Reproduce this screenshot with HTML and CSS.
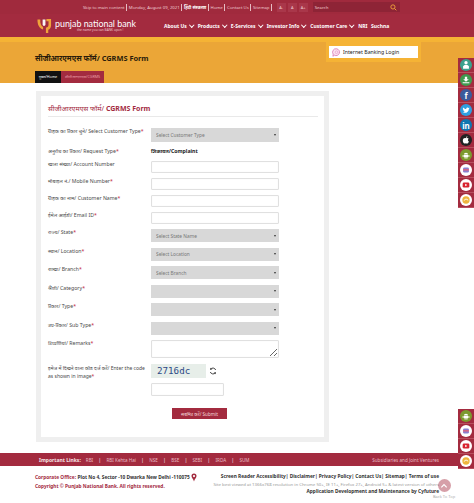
FILE: index.html
```html
<!DOCTYPE html>
<html lang="en">
<head>
    <meta charset="UTF-8">
    <meta name="viewport" content="width=device-width, initial-scale=1.0">
    <title>CGRMS Form</title>
    <link rel="stylesheet" href="styles.css">
</head>
<body>
    <header class="site-header">
        <div class="top-bar">
            <span>Skip to main content</span><i></i>
            <span>Monday, August 09, 2021</span><i></i>
            <span class="strong">हिंदी संस्करण</span><i></i>
            <span>Home</span><i></i>
            <span>Contact Us</span><i></i>
            <span>Sitemap</span><i></i>
            <div class="font-sizer"><b>A-</b><b>A</b><b>A+</b></div>
            <div class="search-box">
                <span>Search</span>
                <svg viewBox="0 0 10 10" width="7" height="7"><circle cx="4.2" cy="4.2" r="3" fill="none" stroke="#f0a33a" stroke-width="1.3"/><path d="M6.5 6.5L9 9" stroke="#f0a33a" stroke-width="1.4"/></svg>
            </div>
        </div>
        <div class="main-nav">
            <div class="logo">
                <svg viewBox="0 0 16 16" width="15" height="15">
                    <path d="M0.5 1.5H3.5C3.2 6 4.5 8.5 6.5 9.5V12.2C2.5 11 0.3 7 0.5 1.5Z" fill="#f0a33a"/>
                    <path d="M6 1.5H9V7A1.5 1.5 0 0 1 6 7Z" fill="#fff" opacity="0.95"/>
                    <path d="M10 1H15V8C15 10.5 13.5 12 12 12.5V16H9.5V10.5C11.5 10 12.3 9 12.3 7V3.5H10Z" fill="#f0a33a"/>
                </svg>
                <div class="logo-text">
                    <div class="logo-name">punjab national bank</div>
                    <div class="logo-tag">the name you can BANK upon !</div>
                </div>
            </div>
            <nav class="nav-links">
                <a class="has-sub">About Us</a>
                <a class="has-sub">Products</a>
                <a class="has-sub">E-Services</a>
                <a class="has-sub">Investor Info</a>
                <a class="has-sub">Customer Care</a>
                <a>NRI</a>
                <a>Suchna</a>
            </nav>
        </div>
    </header>

    <section class="hero">
        <div class="hero-left">
            <h1>सीजीआरएमएस फॉर्म/ CGRMS Form</h1>
            <div class="breadcrumb">
                <span class="crumb-home">मुख्य/Home</span>
                <span class="crumb-page">सीजीआरएमएस/CGRMS</span>
            </div>
        </div>
        <div class="login-wrap">
            <div class="login-box">
                <svg viewBox="0 0 12 12" width="9" height="9"><path d="M6 1A4.6 4.6 0 1 1 3.2 9.6L1.2 11L1.6 8.2A4.6 4.6 0 0 1 6 1Z" fill="#fbe3f1" stroke="#d977b5" stroke-width="1.1"/><circle cx="6" cy="5.6" r="1.8" fill="none" stroke="#e79ac9" stroke-width="0.9"/></svg>
                <span>Internet Banking Login</span>
            </div>
        </div>
    </section>

    <main class="card">
        <h2><span>सीजीआरएमएस फॉर्म/</span> CGRMS Form</h2>
        <form class="form">
            <div class="row row-first">
                <label>ग्राहक का प्रकार चुने/ Select Customer Type<em>*</em></label>
                <div class="select-wrap"><select><option>Select Customer Type</option></select></div>
            </div>
            <div class="row row-text">
                <label>अनुरोध का प्रकार/ Request Type<em>*</em></label>
                <div class="plain-value">शिकायत/Complaint</div>
            </div>
            <div class="row">
                <label>खाता संख्या/ Account Number</label>
                <input type="text">
            </div>
            <div class="row">
                <label>मोबाइल नं./ Mobile Number<em>*</em></label>
                <input type="text">
            </div>
            <div class="row">
                <label>ग्राहक का नाम/ Customer Name<em>*</em></label>
                <input type="text">
            </div>
            <div class="row">
                <label>ईमेल आईडी/ Email ID<em>*</em></label>
                <input type="text">
            </div>
            <div class="row row-select">
                <label>राज्य/ State<em>*</em></label>
                <div class="select-wrap"><select><option>Select State Name</option></select></div>
            </div>
            <div class="row row-select">
                <label>स्थान/ Location<em>*</em></label>
                <div class="select-wrap"><select><option>Select Location</option></select></div>
            </div>
            <div class="row row-select">
                <label>शाखा/ Branch<em>*</em></label>
                <div class="select-wrap"><select><option>Select Branch</option></select></div>
            </div>
            <div class="row row-select">
                <label>श्रेणी/ Category<em>*</em></label>
                <div class="select-wrap"><select><option></option></select></div>
            </div>
            <div class="row row-select">
                <label>प्रकार/ Type<em>*</em></label>
                <div class="select-wrap"><select><option></option></select></div>
            </div>
            <div class="row row-select">
                <label>उप-प्रकार/ Sub Type<em>*</em></label>
                <div class="select-wrap"><select><option></option></select></div>
            </div>
            <div class="row row-area">
                <label>टिप्पणियां/ Remarks<em>*</em></label>
                <textarea></textarea>
            </div>
            <div class="row row-captcha">
                <label>इमेज में दिखने वाला कोड दर्ज करें/ Enter the code as shown in image<em>*</em></label>
                <div class="captcha">
                    <div class="captcha-line">
                        <div class="captcha-code">2716dc</div>
                        <svg viewBox="0 0 12 12" width="8" height="8"><path d="M10 4.5A4.3 4.3 0 0 0 2.4 3.4M2 7.5A4.3 4.3 0 0 0 9.6 8.6" fill="none" stroke="#444" stroke-width="1.5"/><path d="M1.6 1L2 4.4L5 3.4ZM10.4 11L10 7.6L7 8.6Z" fill="#444"/></svg>
                    </div>
                    <input class="captcha-input" type="text">
                </div>
            </div>
            <div class="submit-row">
                <button type="button" class="submit-btn">सबमिट करें/ Submit</button>
            </div>
        </form>
    </main>

    <div class="links-bar">
        <div class="links">
            <b>Important Links:</b>
            <a>RBI</a><i>|</i><a>RBI Kehta Hai</a><i>|</i><a>NSE</a><i>|</i><a>BSE</a><i>|</i><a>SEBI</a><i>|</i><a>IRDA</a><i>|</i><a>SUM</a>
        </div>
        <a class="subsidiaries">Subsidiaries and Joint Ventures</a>
    </div>

    <footer class="footer">
        <div class="footer-left">
            <div class="office">
                <b class="red">Corporate Office:</b> <b>Plot No 4, Sector -10 Dwarka New Delhi -110075</b>
                <svg viewBox="0 0 10 14" width="6" height="9"><path d="M5 0.5A4.2 4.2 0 0 1 9.2 4.7C9.2 7.5 6 10 5 13.5C4 10 0.8 7.5 0.8 4.7A4.2 4.2 0 0 1 5 0.5Z" fill="#a32b3f"/><circle cx="5" cy="4.6" r="1.8" fill="#fff"/></svg>
            </div>
            <div class="copyright">Copyright © Punjab National Bank. All rights reserved.</div>
        </div>
        <div class="footer-right">
            <div class="foot-links">Screen Reader Accessibility| Disclaimer| Privacy Policy| Contact Us| Sitemap| Terms of use</div>
            <div class="foot-note">Site best viewed at 1366x768 resolution in Chrome 50+, IE 11+, Firefox 27+, Android 5+ &amp; latest version of others</div>
            <div class="foot-credit">Application Development and Maintenance by Cyfuture</div>
        </div>
    </footer>

    <!-- floating stuff -->
    <aside class="side-bar side-top">
        <a><span class="dot teal"><svg viewBox="0 0 12 12"><circle cx="6" cy="3.2" r="2" fill="#fff"/><path d="M2.5 10.5V7.5Q6 4 9.5 7.5V10.5Z" fill="#fff"/></svg></span></a>
        <a><span class="dot green"><svg viewBox="0 0 12 12"><path d="M4.6 2H7.4V5H9.4L6 8L2.6 5H4.6ZM2 8.8H10V10H2Z" fill="#fff"/></svg></span></a>
        <a><span class="dot fb">f</span></a>
        <a><span class="dot tw"><svg viewBox="0 0 12 12"><path d="M2 8.8C5.5 10.5 9.5 8.5 9.5 4.4L10.4 3.4L9.2 3.6C8.4 2.4 6 2.8 6.2 4.9C4.7 4.8 3.4 4.1 2.5 3C2 4 2.4 5 3 5.5L2.4 5.4C2.5 6.3 3.1 6.9 3.8 7.1L3.1 7.2C3.4 7.8 4 8.1 4.5 8.1C3.8 8.6 2.9 8.9 2 8.8Z" fill="#fff"/></svg></span></a>
        <a><span class="dot li">in</span></a>
        <a><span class="dot apple"><svg viewBox="0 0 12 12"><path d="M6 4C7 3.2 8.6 3.4 9.2 4.4C7.8 5.3 8.2 7.2 9.5 7.8C9 9.2 8.1 10.4 7.2 10.3C6.6 10.2 6.4 9.9 5.8 9.9C5.2 9.9 5 10.2 4.4 10.3C3.2 10.4 2 8.2 2.2 6.2C2.4 3.8 4.6 3.2 6 4ZM6 3.4C5.9 2.4 6.8 1.5 7.7 1.4C7.8 2.4 6.9 3.4 6 3.4Z" fill="#fff"/></svg></span></a>
        <a><span class="dot android"><svg viewBox="0 0 12 12"><path d="M3.4 5.4A2.6 2.2 0 0 1 8.6 5.4ZM3.4 5.9H8.6V8.8H7.6V10.4H6.6V8.8H5.4V10.4H4.4V8.8H3.4ZM2 5.9H2.9V8.4H2ZM9.1 5.9H10V8.4H9.1Z" fill="#fff"/></svg></span></a>
        <a><span class="dot white"><svg viewBox="0 0 12 12"><rect x="2.5" y="3" width="7" height="6" rx="1.6" fill="#8a7fd0"/><rect x="2.5" y="5" width="7" height="1.6" fill="#e2637a"/></svg></span></a>
        <a><span class="dot white"><svg viewBox="0 0 12 12"><rect x="2" y="3" width="8" height="6" rx="1.6" fill="#d8232f"/><path d="M5 4.5L7.6 6L5 7.5Z" fill="#fff"/></svg></span></a>
        <a><span class="dot white"><svg viewBox="0 0 12 12"><circle cx="6" cy="6" r="4.4" fill="#eeb53d"/><path d="M3.4 6.6Q6 3 8.6 6.2" fill="none" stroke="#fff" stroke-width="1.1"/></svg></span></a>
    </aside>

    <aside class="side-bar side-bottom">
        <a><span class="dot android"><svg viewBox="0 0 12 12"><path d="M3.4 5.4A2.6 2.2 0 0 1 8.6 5.4ZM3.4 5.9H8.6V8.8H7.6V10.4H6.6V8.8H5.4V10.4H4.4V8.8H3.4ZM2 5.9H2.9V8.4H2ZM9.1 5.9H10V8.4H9.1Z" fill="#fff"/></svg></span></a>
        <a><span class="dot white"><svg viewBox="0 0 12 12"><rect x="2.5" y="3" width="7" height="6" rx="1.6" fill="#8a7fd0"/><rect x="2.5" y="5" width="7" height="1.6" fill="#e2637a"/></svg></span></a>
        <a><span class="dot white"><svg viewBox="0 0 12 12"><rect x="2" y="3" width="8" height="6" rx="1.6" fill="#d8232f"/><path d="M5 4.5L7.6 6L5 7.5Z" fill="#fff"/></svg></span></a>
        <a><span class="dot white"><svg viewBox="0 0 12 12"><circle cx="6" cy="6" r="4.4" fill="#eeb53d"/><path d="M3.4 6.6Q6 3 8.6 6.2" fill="none" stroke="#fff" stroke-width="1.1"/></svg></span></a>
    </aside>

    <a class="back-top">
        <span class="back-circle"><svg viewBox="0 0 12 12" width="8" height="8"><path d="M2 8L6 4L10 8" fill="none" stroke="#fff" stroke-width="1.8"/></svg></span>
        <span class="back-label">Back To Top</span>
    </a>
</body>
</html>
```

FILE: styles.css
```css
* {
    box-sizing: border-box;
}

html, body {
    height: 503px;
    overflow: hidden;
}

body {
    margin: 0;
    position: relative;
    background-color: white;
    font-family: 'Noto Sans', 'Open Sans', sans-serif;
    font-size: 5.2px;
    color: #4a4a4a;
}

/* header */
.site-header {
    height: 37px;
    background-color: #a32b3f;
    color: white;
}

.top-bar {
    height: 14px;
    padding-left: 83px;
    display: flex;
    align-items: center;
    font-size: 4.3px;
    color: #eec9cf;
    background-color: #a02a3d;
}

.top-bar i {
    width: 1px;
    height: 7px;
    margin: 0 1.6px;
    background-color: #e6bcc3;
}

.top-bar .strong {
    font-weight: bold;
    color: white;
}

.font-sizer {
    display: flex;
    margin-left: 3px;
}

.font-sizer b {
    width: 9px;
    height: 9px;
    margin-right: 2px;
    text-align: center;
    line-height: 9px;
    font-size: 4px;
    font-weight: normal;
    background-color: #a9374a;
}

.search-box {
    width: 87px;
    height: 10px;
    margin-left: 3px;
    padding: 0 3px 0 2px;
    display: flex;
    justify-content: space-between;
    align-items: center;
    background-color: #8e2436;
}

.main-nav {
    height: 23px;
    padding-left: 37px;
    display: flex;
    align-items: center;
}

.logo {
    width: 127px;
    flex-shrink: 0;
    display: flex;
    align-items: center;
    gap: 3px;
}

.logo-text {
    width: 80px;
    margin-top: -1px;
}

.logo-name {
    font-family: 'Lato', sans-serif;
    font-size: 8.9px;
    line-height: 9px;
    white-space: nowrap;
}

.logo-tag {
    padding-left: 22px;
    font-size: 3.2px;
    line-height: 4px;
    color: #eec9cf;
    white-space: nowrap;
}

.nav-links {
    display: flex;
    gap: 3.5px;
    font-size: 5px;
    font-weight: bold;
    white-space: nowrap;
}

.has-sub::after {
    content: "";
    display: inline-block;
    width: 2.5px;
    height: 2.5px;
    margin: 0 1px 1px 3px;
    border-right: 0.7px solid white;
    border-bottom: 0.7px solid white;
    transform: rotate(45deg);
}

/* orange band */
.hero {
    height: 46px;
    padding-left: 35px;
    padding-right: 53px;
    display: flex;
    justify-content: space-between;
    background-color: #eba637;
    border-top: 5px solid #f5b335;
}

.hero h1 {
    margin: 11px 0 7px;
    font-size: 7.4px;
    line-height: 11px;
    font-weight: bold;
    color: #2a1c0a;
}

.breadcrumb {
    display: flex;
    height: 12px;
    line-height: 12px;
    font-size: 3.7px;
    white-space: nowrap;
}

.crumb-home {
    width: 26px;
    text-align: center;
    color: white;
    background-color: #111;
}

.crumb-page {
    width: 43px;
    text-align: center;
    color: #e9a0ac;
    background-color: #a32b3f;
}

.login-wrap {
    width: 95px;
    height: 20px;
    padding: 4px 3px;
    background-color: #f5b335;
}

.login-box {
    height: 12px;
    padding-left: 3px;
    display: flex;
    align-items: center;
    gap: 2px;
    font-size: 5.2px;
    color: #222;
    background-color: white;
}

/* form card */
.card {
    width: 293px;
    height: 351px;
    margin: 8px 0 0 36px;
    padding: 8px 6px 0 7px;
    border: 5px solid #efefef;
    background-color: white;
}

.card h2 {
    margin: 0;
    padding-bottom: 4px;
    height: 13px;
    font-size: 7px;
    line-height: 9px;
    color: #a32b3f;
    border-bottom: 1px solid #e9e9e9;
}

.card h2 span {
    font-weight: normal;
}

.form {
    padding-top: 11px;
}

.row {
    display: grid;
    grid-template-columns: 103px 128px;
    grid-template-rows: minmax(0, 1fr);
    height: 12px;
    margin-bottom: 5px;
}

.row label {
    padding-right: 4px;
    line-height: 7px;
}

.row label em {
    font-style: normal;
    color: #c2213a;
}

.row-first {
    height: 14px;
    margin-bottom: 4px;
}

.row-text {
    height: 11px;
    margin-bottom: 4px;
}

.row-select {
    height: 13px;
    margin-bottom: 5.5px;
}

.row-area {
    height: 18px;
    margin-bottom: 6px;
}

.row-captcha {
    height: 32px;
    margin-bottom: 12px;
}

.row-captcha label {
    padding-right: 0;
    font-size: 5px;
    line-height: 8px;
}

.row-text label {
    padding-top: 2px;
}

.plain-value {
    line-height: 10px;
    font-weight: bold;
    color: #222;
}

.row input,
.row textarea {
    display: block;
    width: 128px;
    height: 100%;
    padding: 0 4px;
    font-size: 5px;
    border: 1px solid #e0e0e0;
    border-radius: 1px;
    background-color: white;
    box-shadow: inset 0 0 1px rgba(0, 0, 0, 0.1);
}

.select-wrap {
    position: relative;
    height: 100%;
}

.select-wrap::after {
    content: "";
    position: absolute;
    right: 3px;
    top: 50%;
    margin-top: -1px;
    border-left: 1px solid transparent;
    border-right: 1px solid transparent;
    border-top: 2px solid #333;
}

.select-wrap select {
    display: block;
    width: 100%;
    height: 100%;
    padding: 0 5px;
    appearance: none;
    border: none;
    font-family: inherit;
    font-size: 4.8px;
    color: #777;
    background-color: #d8d8d8;
}

.captcha-line {
    display: flex;
    align-items: center;
    gap: 3px;
    height: 14px;
    margin-bottom: 5px;
}

.captcha-code {
    width: 55px;
    height: 14px;
    padding-left: 6px;
    line-height: 14px;
    font-family: 'DejaVu Sans Mono', monospace;
    font-size: 9.2px;
    color: #2c4a86;
    background-color: #e7eee9;
}

.row .captcha-input {
    width: 73px;
    height: 13px;
}

.submit-row {
    padding-left: 124px;
}

.submit-btn {
    display: block;
    width: 55px;
    height: 11px;
    padding: 0;
    border: none;
    font-family: inherit;
    font-size: 4.6px;
    color: #f3d7db;
    background-color: #a32b3f;
}

/* footer */
.links-bar {
    height: 13px;
    margin-top: 11px;
    padding: 0 35px 0 39px;
    display: flex;
    justify-content: space-between;
    align-items: center;
    font-size: 4.6px;
    color: #e9bcc4;
    background-color: #a32b3f;
}

.links {
    display: flex;
    align-items: center;
}

.links b {
    margin-right: 5px;
    font-size: 5px;
    color: #f6e3e6;
}

.links i {
    margin: 0 5.4px;
    font-style: normal;
    color: white;
}

.footer {
    padding: 7px 35px 0;
    display: flex;
    justify-content: space-between;
}

.footer-left {
    font-size: 4.8px;
    line-height: 9px;
    white-space: nowrap;
}

.office {
    display: flex;
    align-items: center;
    gap: 1.5px;
    color: #333;
}

.red,
.copyright {
    font-weight: bold;
    color: #a32b3f;
}

.footer-right {
    text-align: right;
    white-space: nowrap;
    font-size: 4.8px;
    line-height: 7.6px;
    font-weight: bold;
    color: #333;
}

.foot-note {
    font-size: 4.3px;
    font-weight: normal;
    color: #999;
}

/* right hand buttons */
.side-bar {
    position: absolute;
    right: 0;
    width: 16px;
    background-color: #a32b3f;
}

.side-top {
    top: 58px;
}

.side-bottom {
    top: 409px;
}

.side-bar a {
    display: flex;
    justify-content: center;
    align-items: center;
    height: 15px;
    border-bottom: 1px solid #b8505f;
}

.dot {
    width: 12px;
    height: 12px;
    border-radius: 50%;
    display: flex;
    justify-content: center;
    align-items: center;
    font-size: 8px;
    font-weight: bold;
    color: white;
}

.dot svg {
    width: 10px;
    height: 10px;
}

.teal { background-color: #3aa18e; }
.green { background-color: #3f9a50; }
.fb { background-color: #3a5a9b; }
.tw { background-color: #2f9fe0; }
.li { background-color: #0f76b0; }
.apple { background-color: #222; }
.android { background-color: #7c9a2e; }
.white { background-color: white; }

.back-top {
    position: absolute;
    left: 433px;
    top: 479px;
    width: 22px;
    display: flex;
    flex-direction: column;
    align-items: center;
}

.back-circle {
    width: 13px;
    height: 13px;
    border-radius: 50%;
    display: flex;
    justify-content: center;
    align-items: center;
    background-color: rgba(163, 43, 63, 0.45);
}

.back-label {
    margin-top: 2px;
    font-size: 4px;
    color: #aaa;
    white-space: nowrap;
}
```
